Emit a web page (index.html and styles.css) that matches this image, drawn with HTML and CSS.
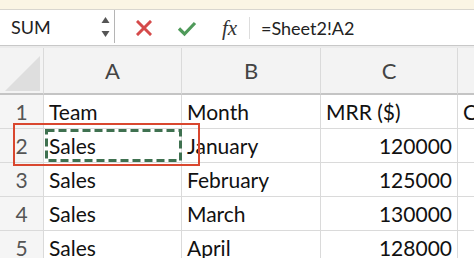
FILE: index.html
```html
<!DOCTYPE html>
<html lang="en">
<head>
  <meta charset="UTF-8">
  <title>Sheet</title>
  <link rel="stylesheet" href="styles.css">
</head>
<body>
  <div class="app">
    <div class="top-strip"></div>
    <div class="formula-bar">
      <div class="name-box">
        <span class="name-text">SUM</span>
        <span class="spinner">
          <svg width="9" height="22" viewBox="0 0 9 22">
            <polygon points="4.5,1 8.5,7 0.5,7" fill="#555"/>
            <polygon points="0.5,15 8.5,15 4.5,21" fill="#555"/>
          </svg>
        </span>
      </div>
      <div class="fx-tools">
        <svg class="ico-x" width="16" height="16" viewBox="0 0 16 16">
          <path d="M2 2 L14 14 M14 2 L2 14" stroke="#d54a4a" stroke-width="3" stroke-linecap="square"/>
        </svg>
        <svg class="ico-check" width="20" height="17" viewBox="0 0 20 17">
          <path d="M2 8.5 L7.5 14 L18 3" stroke="#4f9a5a" stroke-width="3.2" fill="none"/>
        </svg>
        <span class="fx">fx</span>
      </div>
      <div class="formula">=Sheet2!A2</div>
    </div>
    <div class="sheet-gap"></div>
    <div class="grid">
      <div class="corner"><span class="tri"></span></div>
      <div class="col-head">A</div>
      <div class="col-head">B</div>
      <div class="col-head">C</div>
      <div class="col-head last"></div>

      <div class="row-head">1</div>
      <div class="cell">Team</div>
      <div class="cell">Month</div>
      <div class="cell">MRR ($)</div>
      <div class="cell last">C</div>

      <div class="row-head">2</div>
      <div class="cell">Sales</div>
      <div class="cell">January</div>
      <div class="cell num">120000</div>
      <div class="cell last"></div>

      <div class="row-head">3</div>
      <div class="cell">Sales</div>
      <div class="cell">February</div>
      <div class="cell num">125000</div>
      <div class="cell last"></div>

      <div class="row-head">4</div>
      <div class="cell">Sales</div>
      <div class="cell">March</div>
      <div class="cell num">130000</div>
      <div class="cell last"></div>

      <div class="row-head">5</div>
      <div class="cell">Sales</div>
      <div class="cell">April</div>
      <div class="cell num">128000</div>
      <div class="cell last"></div>

      <div class="marquee">
        <svg width="137" height="33" viewBox="0 0 137 33">
          <rect x="1.5" y="1.5" width="134" height="30" fill="none" stroke="#3f7150" stroke-width="3" stroke-dasharray="8 4"/>
        </svg>
      </div>
      <div class="highlight"></div>
    </div>
  </div>
</body>
</html>
```

FILE: styles.css
```css
body {
  margin: 0;
  background: #fff;
  font-family: Lato, "Liberation Sans", sans-serif;
  overflow: hidden;
}
.app {
  width: 474px;
  height: 258px;
  overflow: hidden;
}
.top-strip {
  height: 9px;
  background: #fbf5e4;
  border-bottom: 1px solid #d9d6cf;
}
.formula-bar {
  height: 35px;
  display: flex;
  align-items: stretch;
  background: #fff;
  border-bottom: 1px solid #c8c8c8;
}
.name-box {
  width: 115px;
  display: flex;
  align-items: center;
  justify-content: space-between;
  padding: 0 4px 0 11px;
  box-sizing: border-box;
  border-right: 1px solid #b5b5b5;
  margin-bottom: 2px;
}
.name-text {
  font-size: 18px;
  color: #222;
}
.spinner {
  display: flex;
}
.fx-tools {
  width: 137px;
  display: flex;
  align-items: center;
  padding-left: 21px;
  box-sizing: border-box;
}
.ico-x {
  margin-right: 25px;
}
.ico-check {
  margin-right: 25px;
  margin-top: 2px;
}
.fx {
  font-family: "Liberation Serif", serif;
  font-style: italic;
  font-size: 21px;
  color: #333;
  padding-right: 12px;
  border-right: 1px solid #ddd;
  line-height: 22px;
}
.formula {
  display: flex;
  align-items: center;
  padding-left: 9px;
  font-size: 18px;
  color: #222;
}
.sheet-gap {
  height: 2px;
  background: #ebebeb;
}
.grid {
  position: relative;
  display: grid;
  grid-template-columns: 44px 138px 139px 137px 16px;
  grid-template-rows: 47px repeat(5, 34px);
}
.grid > div {
  box-sizing: border-box;
  border-right: 1px solid #dadada;
  border-bottom: 1px solid #dadada;
}
.corner {
  background: #f3f3f3;
  border-bottom: 2px solid #c4c4c4 !important;
  display: flex;
  align-items: flex-end;
  padding: 0 3px 2px 5px;
}
.tri {
  width: 36px;
  height: 35px;
  background: #dedede;
  clip-path: polygon(100% 0, 100% 100%, 0 100%);
}
.col-head {
  background: #f3f3f3;
  border-bottom: 2px solid #c4c4c4 !important;
  display: flex;
  align-items: center;
  justify-content: center;
  font-size: 22px;
  color: #444;
}
.row-head {
  background: #f5f5f5;
  display: flex;
  align-items: center;
  justify-content: center;
  font-size: 21px;
  color: #555;
}
.cell {
  display: flex;
  align-items: center;
  padding-left: 5px;
  font-size: 21px;
  color: #111;
  white-space: nowrap;
  overflow: hidden;
}
.cell.num {
  justify-content: flex-end;
  padding: 0 5px 0 0;
}
.grid > .last {
  border-right: none;
}
.grid > .marquee {
  position: absolute;
  left: 45px;
  top: 81px;
  width: 137px;
  height: 33px;
  border: none;
  display: flex;
}
.grid > .highlight {
  position: absolute;
  left: 13px;
  top: 75px;
  width: 187px;
  height: 43px;
  border: 2px solid #d9472f;
}
```
